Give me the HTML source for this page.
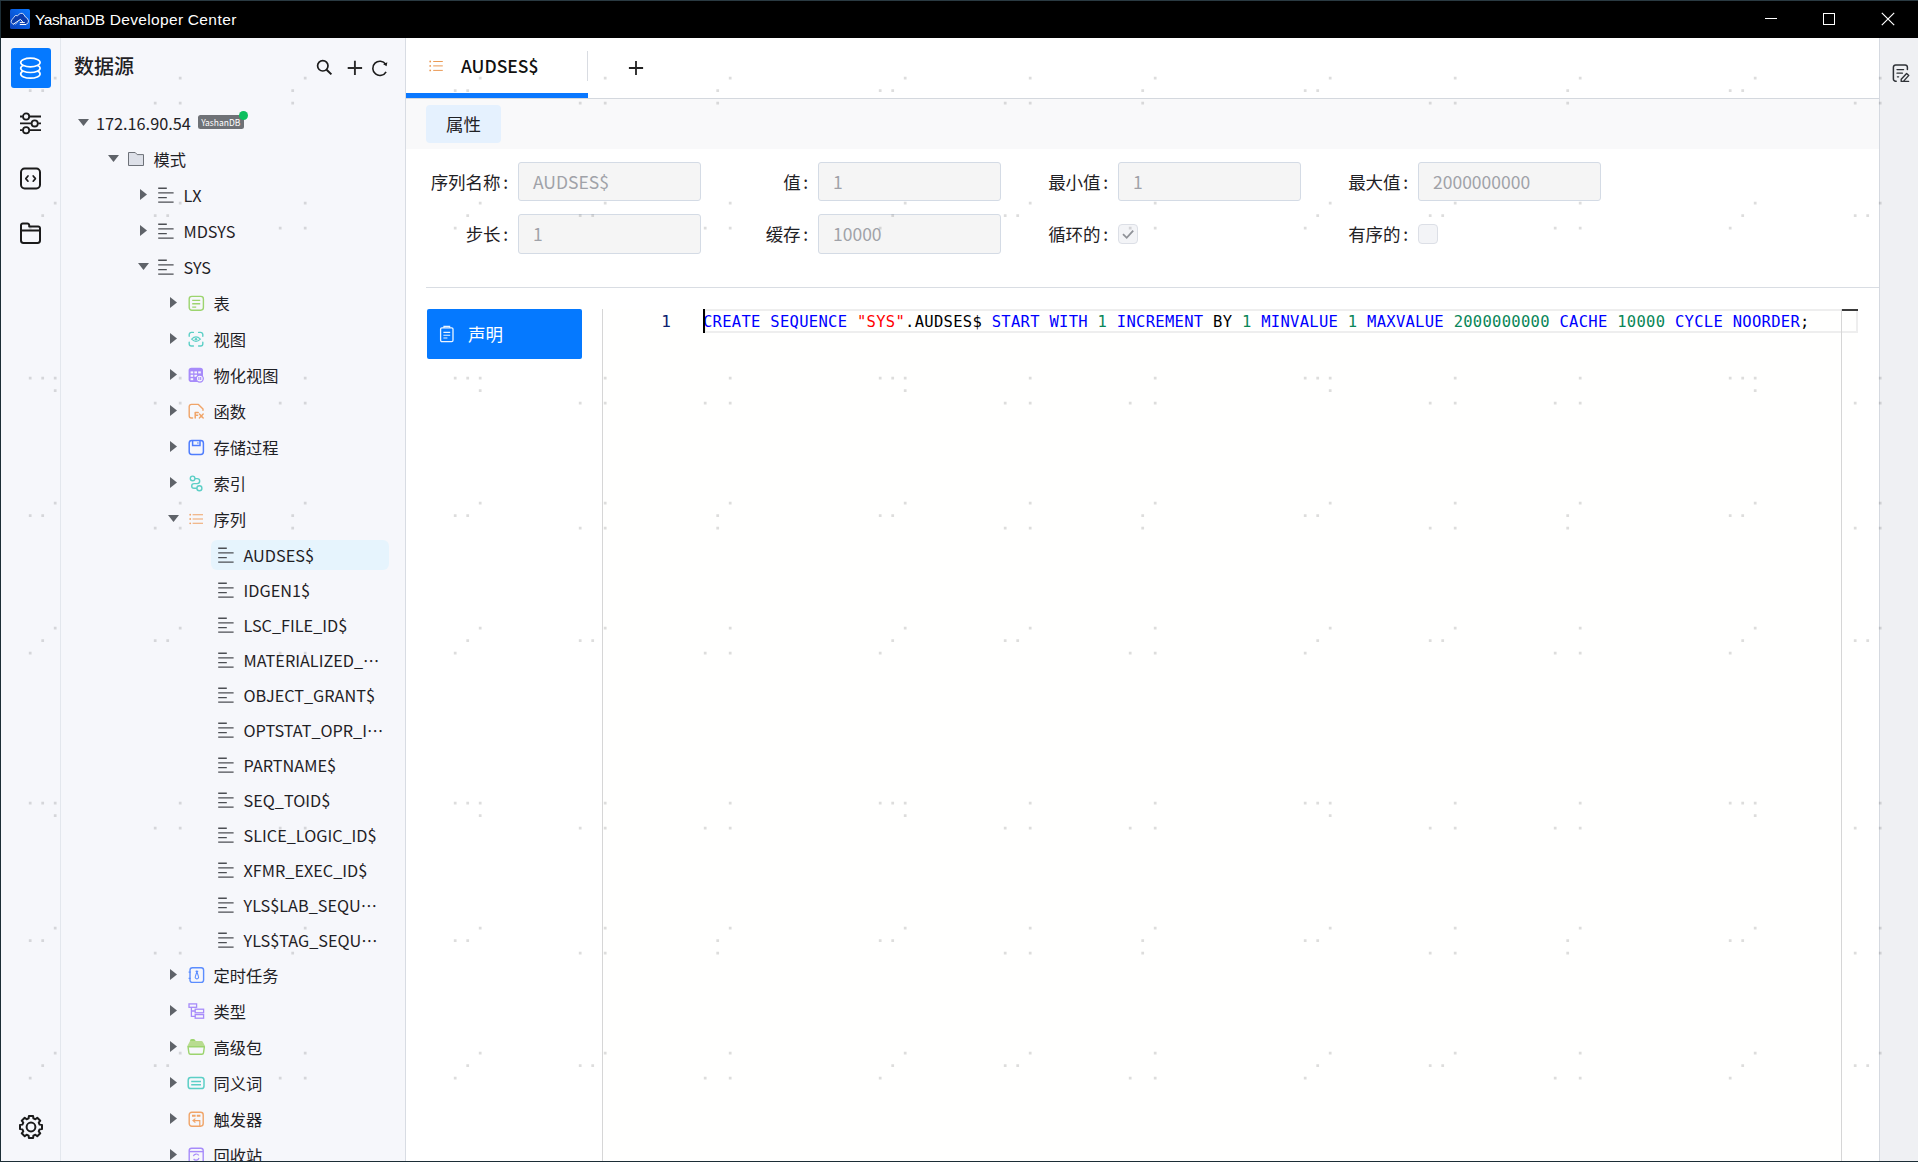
<!DOCTYPE html>
<html lang="zh-CN">
<head>
<meta charset="utf-8">
<title>YashanDB Developer Center</title>
<style>
*{box-sizing:border-box;margin:0;padding:0}
html,body{width:1918px;height:1162px;overflow:hidden;background:#fff}
body{position:relative;font-family:"Noto Sans CJK SC","Liberation Sans",sans-serif;color:#1f2125;font-size:16.25px}
.abs{position:absolute}
svg{display:block;overflow:visible}
#titlebar{left:0;top:0;width:1918px;height:38px;background:#000;color:#fff}
#titlebar .ttl{left:35px;top:0;height:38px;line-height:39px;font-family:"Liberation Sans",sans-serif;font-size:15.5px;letter-spacing:.17px;white-space:nowrap}
#nav{left:1px;top:38px;width:59px;height:1124px;background:#f6f7fb}
#navb{left:60px;top:38px;width:1px;height:1124px;background:#e3e7ed}
#side{left:61px;top:38px;width:344px;height:1124px;background:#f6f7fb;overflow:hidden}
#sideb{left:405px;top:38px;width:1px;height:1124px;background:#d8dce3}
#main{left:406px;top:38px;width:1473px;height:1124px;background:#fff}
#rpb{left:1879px;top:38px;width:1px;height:1124px;background:#d5d9e0}
#rp{left:1880px;top:38px;width:38px;height:1124px;background:#eff0f3}
#lb{left:0;top:0;width:1px;height:1162px;background:#1c2d36}
#bb{left:0;top:1161px;width:1918px;height:1px;background:#1c2d36}
#tb{left:0;top:0;width:1918px;height:1px;background:#2a3a42}
.navact{left:11px;top:48px;width:40px;height:40px;border-radius:3px;background:#0579ff}
.h1{left:74px;top:49px;height:34px;line-height:34px;font-size:20px;font-weight:500;color:#1f2125;white-space:nowrap}
.row{left:0;height:36px;line-height:36px;white-space:nowrap;font-size:16.25px;color:#1f2125}
.row .t{position:absolute;top:0;height:36px;line-height:35px}
.sel{left:211px;top:540px;width:178px;height:30px;border-radius:6px;background:#e6f4fd}
.badge{left:198px;top:115px;width:45.5px;height:14px;border-radius:2.5px;background:#6f7277;color:#fff;font-size:8.5px;line-height:15px;text-align:center;letter-spacing:0}
.dot{left:238.6px;top:110.6px;width:9.4px;height:9.4px;border-radius:50%;background:#0cbf5e}
/* main */
.tabtxt{left:461px;top:50px;height:32px;line-height:32px;font-size:17.5px;font-weight:500;color:#111;white-space:nowrap}
.tabsep{left:587px;top:51px;width:1px;height:30px;background:#d9dce2}
.tabline{left:406px;top:93px;width:182px;height:5px;background:#0a78ff}
.tabbb{left:406px;top:98px;width:1473px;height:1px;background:#d4d8de}
.subbar{left:406px;top:99px;width:1473px;height:50px;background:#f9f9fa}
.pill{left:426px;top:105px;width:75px;height:38px;border-radius:4px;background:#e5f1fe;font-size:17.5px;line-height:37px;text-align:center;color:#1f2125}
.lbl i{font-style:normal;margin-left:2.5px}
.lbl{height:40px;line-height:40px;font-size:17.5px;color:#1f2125;white-space:nowrap;text-align:right;width:110px}
.inp{width:183px;height:39px;border:1px solid #d4dbe5;border-radius:3px;background:#f5f5f5;color:#a0a2a8;font-size:17.5px;line-height:37px;padding-left:14px;white-space:nowrap}
.cb{width:20px;height:20px;border:1px solid #dcdfe6;border-radius:4px;background:#f3f4f7}
.hr{left:426px;top:287px;width:1453px;height:1px;background:#d9dde3}
.btn{left:427px;top:309px;width:155px;height:50px;background:#0579ff;border-radius:2px;color:#fff;font-size:17.5px;line-height:49px}
.vline{left:602px;top:309px;width:1px;height:853px;background:#d6d6d6}
.ed{left:603px;top:309px;width:1255px;height:853px;background:#fffffe}
.ln{left:641px;top:310px;width:30px;height:24px;line-height:24px;text-align:right;font-family:"DejaVu Sans Mono","Liberation Mono",monospace;font-size:16px;color:#0b216f}
.cl{left:704px;top:309px;width:1154px;height:24px;border:2px solid #eee}
.code{left:703px;top:310px;height:24px;line-height:24px;font-family:"DejaVu Sans Mono","Liberation Mono",monospace;font-size:15.5px;letter-spacing:.29px;white-space:pre;color:#000}
.k{color:#0000ff}.s{color:#ff0000}.n{color:#098658}
.cur{left:703px;top:309px;width:2px;height:24px;background:#000}
.ovl{left:1841px;top:309px;width:1px;height:853px;background:#d6d6d6}
.ovm{left:1842px;top:309px;width:16px;height:2px;background:#3a3a3a}
</style>
</head>
<body>
<div id="titlebar" class="abs"><svg class="abs" style="left:10px;top:9px" width="20" height="20" viewBox="0 0 20 20"><defs><linearGradient id="lg" x1="1" y1="0" x2="0" y2="1"><stop offset="0" stop-color="#0a78ff"/><stop offset="1" stop-color="#0b40bb"/></linearGradient></defs><rect width="20" height="20" rx="1.6" fill="url(#lg)"/><path d="M3 15.4L1.4 13.5L1.2 12.2L2.2 10.4L4 8.2L5.4 6.5L7.6 6.7L9.2 5.2L10.6 4.4H12.4L14 5.6L15.4 8L17.4 9.4L18.5 11.8L18 13.7L16.8 15L15.4 15.5H10L10.5 10.4Z" fill="#0a3cad"/><path d="M3 15.4L1.4 13.5L1.2 12.2L2.2 10.4L4 8.2L5.4 6.5L7.6 6.7L9.2 5.2L10.6 4.4H12.4L14 5.6L15.4 8L17.4 9.4L18.5 11.8L18 13.7L16.8 15L15.6 15.5" fill="none" stroke="#fff" stroke-width=".85" stroke-opacity=".92" stroke-linejoin="round"/><path d="M3 15.4L10.5 10.4L13 13.3M9.8 13.6H14.8M9.8 15.5H16" fill="none" stroke="#fff" stroke-width="1"/><path d="M4.8 15.8L7.8 13.4" stroke="#fff" stroke-opacity=".55" stroke-width=".8"/></svg><div class="ttl abs"><span style="letter-spacing:-.4px;margin-right:.4px">YashanDB</span> <span style="letter-spacing:.36px;margin-right:-.36px">Developer</span> <span style="letter-spacing:.45px">Center</span></div><svg class="abs" style="left:1764px;top:11px" width="16" height="16" viewBox="0 0 16 16"><path d="M1 7.5H13" stroke="#fff" stroke-width="1"/></svg><svg class="abs" style="left:1822px;top:12px" width="14" height="14" viewBox="0 0 14 14"><rect x="1.5" y="1.5" width="11" height="11" fill="none" stroke="#fff" stroke-width="1"/></svg><svg class="abs" style="left:1881px;top:12px" width="14" height="14" viewBox="0 0 14 14"><path d="M.8 .8L13.2 13.2M13.2 .8L.8 13.2" stroke="#fff" stroke-width="1.2"/></svg></div>
<div id="nav" class="abs"></div><div id="navb" class="abs"></div>
<div id="side" class="abs"></div><div id="sideb" class="abs"></div>
<div id="main" class="abs"></div>
<div id="rpb" class="abs"></div><div id="rp" class="abs"></div>
<div class="navact abs"></div><svg class="abs" style="left:18px;top:55px" width="26" height="26" viewBox="0 0 26 26"><g fill="#0579ff" stroke="#fff" stroke-width="1.7"><ellipse cx="12.4" cy="18.9" rx="9.7" ry="4.3"/><ellipse cx="12.4" cy="13.2" rx="9.7" ry="4.3"/><ellipse cx="12.4" cy="7.5" rx="9.7" ry="4.3"/></g></svg><svg class="abs" style="left:18px;top:111px" width="26" height="26" viewBox="0 0 26 26"><g fill="none" stroke="#1b1b1b" stroke-width="1.8"><path d="M2 5.5H4.6M11.6 5.5H23M2 12.4H13.2M20.2 12.4H23M2 19.2H4.6M11.6 19.2H23"/><circle cx="8.1" cy="5.5" r="3.1"/><circle cx="16.7" cy="12.4" r="3.1"/><circle cx="8.1" cy="19.2" r="3.1"/></g></svg><svg class="abs" style="left:18px;top:165px" width="26" height="26" viewBox="0 0 26 26"><g fill="none" stroke="#1b1b1b" stroke-width="2" stroke-linecap="round" stroke-linejoin="round"><rect x="3" y="3.6" width="19" height="19.8" rx="3.6"/><path d="M10 11L7.8 13.6L10 16.2M15.2 11L17.4 13.6L15.2 16.2" stroke-width="1.7"/></g></svg><svg class="abs" style="left:18px;top:220px" width="26" height="26" viewBox="0 0 26 26"><g fill="none" stroke="#1b1b1b" stroke-width="2" stroke-linejoin="round"><path d="M3 20.6V5.2A1.8 1.8 0 0 1 4.8 3.4H9.4A1.8 1.8 0 0 1 11.2 5.2V6.4H20.2A1.8 1.8 0 0 1 22 8.2V20.6A2.4 2.4 0 0 1 19.6 23H5.4A2.4 2.4 0 0 1 3 20.6ZM3 10.4H22" /></g></svg><svg class="abs" style="left:18px;top:1114px" width="26" height="26" viewBox="0 0 26 26"><g fill="none" stroke="#1b1b1b" stroke-width="2" stroke-linejoin="round"><path d="M10.63 4.42L10.88 2.00L15.12 2.00L15.37 4.42L17.39 5.26L19.28 3.73L22.27 6.72L20.74 8.61L21.58 10.63L24.00 10.88L24.00 15.12L21.58 15.37L20.74 17.39L22.27 19.28L19.28 22.27L17.39 20.74L15.37 21.58L15.12 24.00L10.88 24.00L10.63 21.58L8.61 20.74L6.72 22.27L3.73 19.28L5.26 17.39L4.42 15.37L2.00 15.12L2.00 10.88L4.42 10.63L5.26 8.61L3.73 6.72L6.72 3.73L8.61 5.26Z"/><circle cx="13" cy="13" r="4.4"/></g></svg>
<div class="h1 abs">数据源</div><svg class="abs" style="left:314px;top:58px" width="20" height="20" viewBox="0 0 20 20"><g fill="none" stroke="#1b1b1b" stroke-width="1.7"><circle cx="8.8" cy="7.8" r="5.2"/><path d="M12.6 11.8L17.4 16.4" stroke-width="2"/></g></svg><svg class="abs" style="left:346px;top:59px" width="18" height="18" viewBox="0 0 18 18"><path d="M1.7 9H16.1M8.9 1.8V16.1" stroke="#2b2b2b" stroke-width="1.9" fill="none"/></svg><svg class="abs" style="left:370px;top:58px" width="20" height="20" viewBox="0 0 20 20"><g fill="none" stroke="#1b1b1b" stroke-width="1.6"><path d="M16.1 13.8A7.1 7.1 0 1 1 15.7 6.2"/></g><path d="M17.3 4.2L16.6 8.2L13.2 6.2Z" fill="#1b1b1b"/></svg>
<div class="sel abs"></div><svg class="abs" style="left:78px;top:119.0px" width="11" height="7" viewBox="0 0 11 7"><path d="M0 0H11L5.5 7Z" fill="#5f6369"/></svg><div class="row abs" style="top:105px;left:96px;height:36px;line-height:36px">172.16.90.54</div>
<svg class="abs" style="left:108px;top:155.0px" width="11" height="7" viewBox="0 0 11 7"><path d="M0 0H11L5.5 7Z" fill="#5f6369"/></svg><svg class="abs" style="left:126.8px;top:150.2px" width="18" height="18" viewBox="0 0 18 18"><path d="M1.5 2.5H8.2L10.2 4.6H16.5V15.5H1.5Z" fill="#dde0e8" stroke="#6d7178" stroke-width="1"/></svg><div class="row abs" style="top:141px;left:153.5px;height:36px;line-height:36px">模式</div>
<svg class="abs" style="left:140px;top:189.0px" width="7" height="11" viewBox="0 0 7 11"><path d="M0 0V11L7 5.5Z" fill="#5f6369"/></svg><svg class="abs" style="left:156.8px;top:185.9px" width="18" height="18" viewBox="0 0 18 18"><g stroke="#4c4f54" stroke-width="1.35" fill="none"><path d="M1.2 2.2H9.8M1.2 6.8H16.6M1.2 11.6H9.8M1.2 16.1H16.6"/></g></svg><div class="row abs" style="top:177px;left:183.5px;height:36px;line-height:36px">LX</div>
<svg class="abs" style="left:140px;top:225.0px" width="7" height="11" viewBox="0 0 7 11"><path d="M0 0V11L7 5.5Z" fill="#5f6369"/></svg><svg class="abs" style="left:156.8px;top:221.9px" width="18" height="18" viewBox="0 0 18 18"><g stroke="#4c4f54" stroke-width="1.35" fill="none"><path d="M1.2 2.2H9.8M1.2 6.8H16.6M1.2 11.6H9.8M1.2 16.1H16.6"/></g></svg><div class="row abs" style="top:213px;left:183.5px;height:36px;line-height:36px">MDSYS</div>
<svg class="abs" style="left:138px;top:263.0px" width="11" height="7" viewBox="0 0 11 7"><path d="M0 0H11L5.5 7Z" fill="#5f6369"/></svg><svg class="abs" style="left:156.8px;top:257.9px" width="18" height="18" viewBox="0 0 18 18"><g stroke="#4c4f54" stroke-width="1.35" fill="none"><path d="M1.2 2.2H9.8M1.2 6.8H16.6M1.2 11.6H9.8M1.2 16.1H16.6"/></g></svg><div class="row abs" style="top:249px;left:183.5px;height:36px;line-height:36px">SYS</div>
<svg class="abs" style="left:170px;top:297.0px" width="7" height="11" viewBox="0 0 7 11"><path d="M0 0V11L7 5.5Z" fill="#5f6369"/></svg><svg class="abs" style="left:186.8px;top:294.2px" width="18" height="18" viewBox="0 0 18 18"><g stroke="#9cd46e" stroke-width="1.4" fill="none"><rect x="2.2" y="2.4" width="14.2" height="13.8" rx="2.6"/><path d="M5.2 6.4H13.2M5.2 9.7H13.2M5.2 13.1H9.2"/></g></svg><div class="row abs" style="top:285px;left:213.5px;height:36px;line-height:36px">表</div>
<svg class="abs" style="left:170px;top:333.0px" width="7" height="11" viewBox="0 0 7 11"><path d="M0 0V11L7 5.5Z" fill="#5f6369"/></svg><svg class="abs" style="left:186.8px;top:330.2px" width="18" height="18" viewBox="0 0 18 18"><g stroke="#5ccfc6" stroke-width="1.4" fill="none" stroke-linecap="round"><path d="M2.2 6.2V4.6A2.2 2.2 0 0 1 4.4 2.4H6.4M11.6 2.4H13.6A2.2 2.2 0 0 1 15.8 4.6V6.2M15.8 12.2V13.8A2.2 2.2 0 0 1 13.6 16H11.6M6.4 16H4.4A2.2 2.2 0 0 1 2.2 13.8V12.2"/><path d="M4.6 9.2Q9 4.6 13.4 9.2Q9 13.8 4.6 9.2Z" stroke-width="1.1"/></g><circle cx="9" cy="9.2" r="1.3" fill="#5ccfc6"/></svg><div class="row abs" style="top:321px;left:213.5px;height:36px;line-height:36px">视图</div>
<svg class="abs" style="left:170px;top:369.0px" width="7" height="11" viewBox="0 0 7 11"><path d="M0 0V11L7 5.5Z" fill="#5f6369"/></svg><svg class="abs" style="left:186.8px;top:365.9px" width="18" height="18" viewBox="0 0 18 18"><rect x="1.6" y="1.8" width="14.4" height="14.2" rx="2.8" fill="#a78bfa"/><g fill="#f6f7fb"><rect x="3.6" y="5.4" width="2.6" height="2"/><rect x="7.4" y="5.4" width="2.6" height="2"/><rect x="11.2" y="5.4" width="2.6" height="2"/><rect x="3.6" y="8.8" width="2.6" height="2"/><rect x="7.4" y="8.8" width="2.6" height="2"/><rect x="3.6" y="12.2" width="2.6" height="2"/></g><circle cx="12.8" cy="12.6" r="3.5" fill="#f6f7fb" stroke="#a78bfa" stroke-width="1.3"/><path d="M11.9 11.1V14.1M13.7 11.1V14.1" stroke="#a78bfa" stroke-width="1.1"/></svg><div class="row abs" style="top:357px;left:213.5px;height:36px;line-height:36px">物化视图</div>
<svg class="abs" style="left:170px;top:405.0px" width="7" height="11" viewBox="0 0 7 11"><path d="M0 0V11L7 5.5Z" fill="#5f6369"/></svg><svg class="abs" style="left:186.8px;top:402.2px" width="18" height="18" viewBox="0 0 18 18"><g stroke="#f0a468" stroke-width="1.4" fill="none" stroke-linejoin="round" stroke-linecap="round"><path d="M5.6 16H4.4A2.2 2.2 0 0 1 2.2 13.8V4.6A2.2 2.2 0 0 1 4.4 2.4H11.4L16 7V8.2"/><path d="M8.2 16V10.4H11.2M8.2 13.2H10.6" stroke-width="1.5"/><path d="M12.4 12L16.2 16M16.2 12L12.4 16" stroke-width="1.4"/></g></svg><div class="row abs" style="top:393px;left:213.5px;height:36px;line-height:36px">函数</div>
<svg class="abs" style="left:170px;top:441.0px" width="7" height="11" viewBox="0 0 7 11"><path d="M0 0V11L7 5.5Z" fill="#5f6369"/></svg><svg class="abs" style="left:186.8px;top:437.6px" width="18" height="18" viewBox="0 0 18 18"><g stroke="#4f7dfd" stroke-width="1.5" fill="none"><rect x="2.2" y="2.4" width="14.2" height="14" rx="2.6"/><path d="M5.6 2.6V7.4H13V2.6"/></g><circle cx="10.9" cy="5" r=".8" fill="#4f7dfd"/></svg><div class="row abs" style="top:429px;left:213.5px;height:36px;line-height:36px">存储过程</div>
<svg class="abs" style="left:170px;top:477.0px" width="7" height="11" viewBox="0 0 7 11"><path d="M0 0V11L7 5.5Z" fill="#5f6369"/></svg><svg class="abs" style="left:186.8px;top:473.8px" width="18" height="18" viewBox="0 0 18 18"><g stroke="#5ccfc6" stroke-width="1.4" fill="none"><circle cx="5.6" cy="4.4" r="2.3"/><circle cx="12.4" cy="14.2" r="2.5"/><path d="M7.9 4.6H10.2A2.4 2.4 0 0 1 10.2 9.6H7A2.3 2.3 0 0 0 7 14.2H9.9"/></g></svg><div class="row abs" style="top:465px;left:213.5px;height:36px;line-height:36px">索引</div>
<svg class="abs" style="left:168px;top:515.0px" width="11" height="7" viewBox="0 0 11 7"><path d="M0 0H11L5.5 7Z" fill="#5f6369"/></svg><svg class="abs" style="left:186.8px;top:510.2px" width="18" height="18" viewBox="0 0 18 18"><g stroke="#f0a468" stroke-width="1.1" fill="none"><path d="M5.6 4.7H16M5.6 9H16M5.6 13.3H16"/></g><g fill="#f0a468"><circle cx="3.2" cy="4.7" r=".9"/><circle cx="3.2" cy="9" r=".9"/><circle cx="3.2" cy="13.3" r=".9"/></g></svg><div class="row abs" style="top:501px;left:213.5px;height:36px;line-height:36px">序列</div>
<svg class="abs" style="left:216.8px;top:546.4px" width="18" height="18" viewBox="0 0 18 18"><g stroke="#4c4f54" stroke-width="1.35" fill="none"><path d="M1.2 2.2H9.8M1.2 6.8H16.6M1.2 11.6H9.8M1.2 16.1H16.6"/></g></svg><div class="row abs" style="top:538px;left:243.5px;height:35px;line-height:35px">AUDSES$</div>
<svg class="abs" style="left:216.8px;top:581.4px" width="18" height="18" viewBox="0 0 18 18"><g stroke="#4c4f54" stroke-width="1.35" fill="none"><path d="M1.2 2.2H9.8M1.2 6.8H16.6M1.2 11.6H9.8M1.2 16.1H16.6"/></g></svg><div class="row abs" style="top:573px;left:243.5px;height:35px;line-height:35px">IDGEN1$</div>
<svg class="abs" style="left:216.8px;top:616.4px" width="18" height="18" viewBox="0 0 18 18"><g stroke="#4c4f54" stroke-width="1.35" fill="none"><path d="M1.2 2.2H9.8M1.2 6.8H16.6M1.2 11.6H9.8M1.2 16.1H16.6"/></g></svg><div class="row abs" style="top:608px;left:243.5px;height:35px;line-height:35px">LSC_FILE_ID$</div>
<svg class="abs" style="left:216.8px;top:651.4px" width="18" height="18" viewBox="0 0 18 18"><g stroke="#4c4f54" stroke-width="1.35" fill="none"><path d="M1.2 2.2H9.8M1.2 6.8H16.6M1.2 11.6H9.8M1.2 16.1H16.6"/></g></svg><div class="row abs" style="top:643px;left:243.5px;height:35px;line-height:35px">MATERIALIZED_…</div>
<svg class="abs" style="left:216.8px;top:686.4px" width="18" height="18" viewBox="0 0 18 18"><g stroke="#4c4f54" stroke-width="1.35" fill="none"><path d="M1.2 2.2H9.8M1.2 6.8H16.6M1.2 11.6H9.8M1.2 16.1H16.6"/></g></svg><div class="row abs" style="top:678px;left:243.5px;height:35px;line-height:35px">OBJECT_GRANT$</div>
<svg class="abs" style="left:216.8px;top:721.4px" width="18" height="18" viewBox="0 0 18 18"><g stroke="#4c4f54" stroke-width="1.35" fill="none"><path d="M1.2 2.2H9.8M1.2 6.8H16.6M1.2 11.6H9.8M1.2 16.1H16.6"/></g></svg><div class="row abs" style="top:713px;left:243.5px;height:35px;line-height:35px">OPTSTAT_OPR_I…</div>
<svg class="abs" style="left:216.8px;top:756.4px" width="18" height="18" viewBox="0 0 18 18"><g stroke="#4c4f54" stroke-width="1.35" fill="none"><path d="M1.2 2.2H9.8M1.2 6.8H16.6M1.2 11.6H9.8M1.2 16.1H16.6"/></g></svg><div class="row abs" style="top:748px;left:243.5px;height:35px;line-height:35px">PARTNAME$</div>
<svg class="abs" style="left:216.8px;top:791.4px" width="18" height="18" viewBox="0 0 18 18"><g stroke="#4c4f54" stroke-width="1.35" fill="none"><path d="M1.2 2.2H9.8M1.2 6.8H16.6M1.2 11.6H9.8M1.2 16.1H16.6"/></g></svg><div class="row abs" style="top:783px;left:243.5px;height:35px;line-height:35px">SEQ_TOID$</div>
<svg class="abs" style="left:216.8px;top:826.4px" width="18" height="18" viewBox="0 0 18 18"><g stroke="#4c4f54" stroke-width="1.35" fill="none"><path d="M1.2 2.2H9.8M1.2 6.8H16.6M1.2 11.6H9.8M1.2 16.1H16.6"/></g></svg><div class="row abs" style="top:818px;left:243.5px;height:35px;line-height:35px">SLICE_LOGIC_ID$</div>
<svg class="abs" style="left:216.8px;top:861.4px" width="18" height="18" viewBox="0 0 18 18"><g stroke="#4c4f54" stroke-width="1.35" fill="none"><path d="M1.2 2.2H9.8M1.2 6.8H16.6M1.2 11.6H9.8M1.2 16.1H16.6"/></g></svg><div class="row abs" style="top:853px;left:243.5px;height:35px;line-height:35px">XFMR_EXEC_ID$</div>
<svg class="abs" style="left:216.8px;top:896.4px" width="18" height="18" viewBox="0 0 18 18"><g stroke="#4c4f54" stroke-width="1.35" fill="none"><path d="M1.2 2.2H9.8M1.2 6.8H16.6M1.2 11.6H9.8M1.2 16.1H16.6"/></g></svg><div class="row abs" style="top:888px;left:243.5px;height:35px;line-height:35px">YLS$LAB_SEQU…</div>
<svg class="abs" style="left:216.8px;top:931.4px" width="18" height="18" viewBox="0 0 18 18"><g stroke="#4c4f54" stroke-width="1.35" fill="none"><path d="M1.2 2.2H9.8M1.2 6.8H16.6M1.2 11.6H9.8M1.2 16.1H16.6"/></g></svg><div class="row abs" style="top:923px;left:243.5px;height:35px;line-height:35px">YLS$TAG_SEQU…</div>
<svg class="abs" style="left:170px;top:969.0px" width="7" height="11" viewBox="0 0 7 11"><path d="M0 0V11L7 5.5Z" fill="#5f6369"/></svg><svg class="abs" style="left:186.8px;top:966.2px" width="18" height="18" viewBox="0 0 18 18"><g stroke="#5b8dff" stroke-width="1.4" fill="none"><rect x="3" y="1.8" width="13.6" height="14.6" rx="2.4"/><path d="M1.6 6.2H3.6M1.6 12.4H3.6" stroke-width="1.2"/><path d="M8.6 5.4H11.2M9.9 5.6L8.4 10.4A1.7 1.7 0 1 0 11.4 10.4Z" stroke-width="1.1"/></g></svg><div class="row abs" style="top:957px;left:213.5px;height:36px;line-height:36px">定时任务</div>
<svg class="abs" style="left:170px;top:1005.0px" width="7" height="11" viewBox="0 0 7 11"><path d="M0 0V11L7 5.5Z" fill="#5f6369"/></svg><svg class="abs" style="left:186.8px;top:1002.2px" width="18" height="18" viewBox="0 0 18 18"><g stroke="#a78bfa" stroke-width="1.3" fill="none"><rect x="2" y="1.9" width="7.6" height="3.4"/><rect x="8.2" y="7.2" width="8.4" height="3.6"/><rect x="8.2" y="12.6" width="8.4" height="3.6"/><path d="M4.4 5.3V14.4H8.2M4.4 9H8.2"/></g></svg><div class="row abs" style="top:993px;left:213.5px;height:36px;line-height:36px">类型</div>
<svg class="abs" style="left:170px;top:1041.0px" width="7" height="11" viewBox="0 0 7 11"><path d="M0 0V11L7 5.5Z" fill="#5f6369"/></svg><svg class="abs" style="left:186.8px;top:1037.0px" width="18" height="18" viewBox="0 0 18 18"><path d="M3 5V3.8A1.8 1.8 0 0 1 4.8 2H6.4Q7.6 2 8.2 3.2L8.8 4.6Z" fill="#9cd46e"/><path d="M3.2 4.1H14.4Q15.4 4.1 15.9 5L17.9 8.8V9.8H.5V8.8L2.5 5Q2.8 4.1 3.2 4.1Z" fill="#b8dc90"/><path d="M1 9.7H17.4L16.5 15.9A1.6 1.6 0 0 1 14.9 17.3H3.5A1.6 1.6 0 0 1 1.9 15.9Z" fill="#f6f7fb" stroke="#9cd46e" stroke-width="1.4" stroke-linejoin="round"/></svg><div class="row abs" style="top:1029px;left:213.5px;height:36px;line-height:36px">高级包</div>
<svg class="abs" style="left:170px;top:1077.0px" width="7" height="11" viewBox="0 0 7 11"><path d="M0 0V11L7 5.5Z" fill="#5f6369"/></svg><svg class="abs" style="left:186.8px;top:1074.2px" width="18" height="18" viewBox="0 0 18 18"><g stroke="#5ccfc6" stroke-width="1.5" fill="none"><rect x="1.2" y="3.6" width="15.8" height="11" rx="2.6"/><path d="M4.2 7.6H14M4.2 10.8H14"/></g></svg><div class="row abs" style="top:1065px;left:213.5px;height:36px;line-height:36px">同义词</div>
<svg class="abs" style="left:170px;top:1113.0px" width="7" height="11" viewBox="0 0 7 11"><path d="M0 0V11L7 5.5Z" fill="#5f6369"/></svg><svg class="abs" style="left:186.8px;top:1110.2px" width="18" height="18" viewBox="0 0 18 18"><g stroke="#f0a468" stroke-width="1.4" fill="none"><rect x="2.2" y="2.2" width="14" height="14" rx="2.6"/><path d="M5 5.8H8.6M9.8 5.8H13.4" stroke-width="2"/><path d="M6 10.6H12.8V16M8.4 8.6L6 10.6L8.4 12.6" stroke-width="1.2"/></g></svg><div class="row abs" style="top:1101px;left:213.5px;height:36px;line-height:36px">触发器</div>
<svg class="abs" style="left:170px;top:1149.0px" width="7" height="11" viewBox="0 0 7 11"><path d="M0 0V11L7 5.5Z" fill="#5f6369"/></svg><svg class="abs" style="left:186.8px;top:1146.2px" width="18" height="18" viewBox="0 0 18 18"><g stroke="#a78bfa" stroke-width="1.4" fill="none"><rect x="2.2" y="2.2" width="14" height="15" rx="2.4"/><path d="M2.2 5.6H16.2"/><path d="M6.4 10.2A3 3 0 0 1 11.8 9.4M12 12A3 3 0 0 1 6.6 12.8" stroke-width="1.2"/></g></svg><div class="row abs" style="top:1137px;left:213.5px;height:36px;line-height:36px">回收站</div>
<div class="badge abs">YashanDB</div><div class="dot abs"></div>
<svg class="abs" style="left:427px;top:57px" width="18" height="18" viewBox="0 0 18 18"><g stroke="#ea9a55" stroke-width="1" fill="none"><path d="M6.2 4.5H15.8M6.2 8.9H15.8M6.2 13.4H15.8"/></g><g fill="#ea9a55"><circle cx="3.2" cy="4.5" r=".9"/><circle cx="3.2" cy="8.9" r=".9"/><circle cx="3.2" cy="13.4" r=".9"/></g></svg><div class="tabtxt abs">AUDSES$</div><div class="tabsep abs"></div><svg class="abs" style="left:627px;top:59px" width="18" height="18" viewBox="0 0 18 18"><path d="M1.9 9H16.1M9 1.9V16.1" stroke="#222" stroke-width="1.8" fill="none"/></svg><div class="tabbb abs"></div><div class="tabline abs"></div>
<div class="subbar abs"></div><div class="pill abs">属性</div>
<div class="lbl abs" style="left:398px;top:162px">序列名称<i>:</i></div><div class="inp abs" style="left:518px;top:162px">AUDSES$</div><div class="lbl abs" style="left:698px;top:162px">值<i>:</i></div><div class="inp abs" style="left:818px;top:162px">1</div><div class="lbl abs" style="left:998px;top:162px">最小值<i>:</i></div><div class="inp abs" style="left:1118px;top:162px">1</div><div class="lbl abs" style="left:1298px;top:162px">最大值<i>:</i></div><div class="inp abs" style="left:1418px;top:162px">2000000000</div>
<div class="lbl abs" style="left:398px;top:214px">步长<i>:</i></div><div class="inp abs" style="left:518px;top:214px;height:40px;line-height:38px">1</div><div class="lbl abs" style="left:698px;top:214px">缓存<i>:</i></div><div class="inp abs" style="left:818px;top:214px;height:40px;line-height:38px">10000</div><div class="lbl abs" style="left:998px;top:214px">循环的<i>:</i></div><div class="cb abs" style="left:1118px;top:224px"></div><svg class="abs" style="left:1118px;top:224px" width="20" height="20" viewBox="0 0 20 20"><path d="M5 10.2L8.7 13.8L15.2 6.6" stroke="#8f9298" stroke-width="1.8" fill="none"/></svg><div class="lbl abs" style="left:1298px;top:214px">有序的<i>:</i></div><div class="cb abs" style="left:1418px;top:224px"></div>
<div class="hr abs"></div>
<div class="btn abs"><span class="abs" style="left:41px;top:0">声明</span></div><svg class="abs" style="left:439px;top:325px" width="16" height="18" viewBox="0 0 16 18"><g stroke="#fff" stroke-width="1.3" fill="none" opacity=".92"><rect x="1.6" y="2.8" width="12.4" height="13.8" rx="1.3"/><path d="M5 2.8V1.4H10.6V2.8" /><path d="M4.4 7.4H11.2M4.4 10.2H11.2M4.4 13H8.4" stroke-width="1.1"/></g></svg><div class="vline abs"></div><div class="ed abs"></div><div class="cl abs"></div><div class="ln abs">1</div><div class="code abs"><span class="k">CREATE</span> <span class="k">SEQUENCE</span> <span class="s">"SYS"</span>.AUDSES$ <span class="k">START</span> <span class="k">WITH</span> <span class="n">1</span> <span class="k">INCREMENT</span> BY <span class="n">1</span> <span class="k">MINVALUE</span> <span class="n">1</span> <span class="k">MAXVALUE</span> <span class="n">2000000000</span> <span class="k">CACHE</span> <span class="n">10000</span> <span class="k">CYCLE</span> <span class="k">NOORDER</span>;</div><div class="cur abs"></div><div class="ovl abs"></div><div class="ovm abs"></div>
<svg class="abs" style="left:1890.5px;top:63px" width="20" height="20" viewBox="0 0 20 20"><g fill="none" stroke="#2f3237" stroke-width="1.5" stroke-linecap="round" stroke-linejoin="round"><path d="M5.2 18.2H4.6A2.2 2.2 0 0 1 2.4 16V4.2A2.2 2.2 0 0 1 4.6 2H14.2A2.2 2.2 0 0 1 16.4 4.2V6.4"/><path d="M6 6.6H12.6M6 10.2H11.4M6.4 13.8H7.6" stroke-width="1.3"/><path d="M15.6 10.4L17.8 12.4L12.4 18.4H10.2V16.2Z M12.4 18.4H17.6" stroke-width="1.4"/></g></svg>
<div id="lb" class="abs"></div><div id="bb" class="abs"></div><div id="tb" class="abs"></div>
<svg class="abs" style="left:0;top:0;pointer-events:none" width="1918" height="1162"><defs><pattern id="wm" x="0" y="0" width="425" height="425" patternUnits="userSpaceOnUse"><path d="M303.85 376.7h2.7v2.7h-2.7zM278.85 401.7h2.7v2.7h-2.7zM303.85 401.7h2.7v2.7h-2.7zM28.85 376.7h2.7v2.7h-2.7zM41.35 376.7h2.7v2.7h-2.7zM53.85 376.7h2.7v2.7h-2.7zM53.85 389.2h2.7v2.7h-2.7zM178.85 376.7h2.7v2.7h-2.7zM153.85 401.7h2.7v2.7h-2.7zM178.85 401.7h2.7v2.7h-2.7zM303.85 76.7h2.7v2.7h-2.7zM291.35 89.2h2.7v2.7h-2.7zM291.35 101.7h2.7v2.7h-2.7zM53.85 76.7h2.7v2.7h-2.7zM28.85 89.2h2.7v2.7h-2.7zM41.35 89.2h2.7v2.7h-2.7zM178.85 76.7h2.7v2.7h-2.7zM153.85 101.7h2.7v2.7h-2.7zM178.85 101.7h2.7v2.7h-2.7zM303.85 201.7h2.7v2.7h-2.7zM278.85 226.7h2.7v2.7h-2.7zM303.85 226.7h2.7v2.7h-2.7zM53.85 201.7h2.7v2.7h-2.7zM41.35 214.2h2.7v2.7h-2.7zM28.85 226.7h2.7v2.7h-2.7zM178.85 201.7h2.7v2.7h-2.7zM153.85 214.2h2.7v2.7h-2.7zM166.35 214.2h2.7v2.7h-2.7z" fill="#000" fill-opacity=".135"/></pattern></defs><rect x="1" y="38" width="1917" height="1123" fill="url(#wm)"/></svg>
</body>
</html>
